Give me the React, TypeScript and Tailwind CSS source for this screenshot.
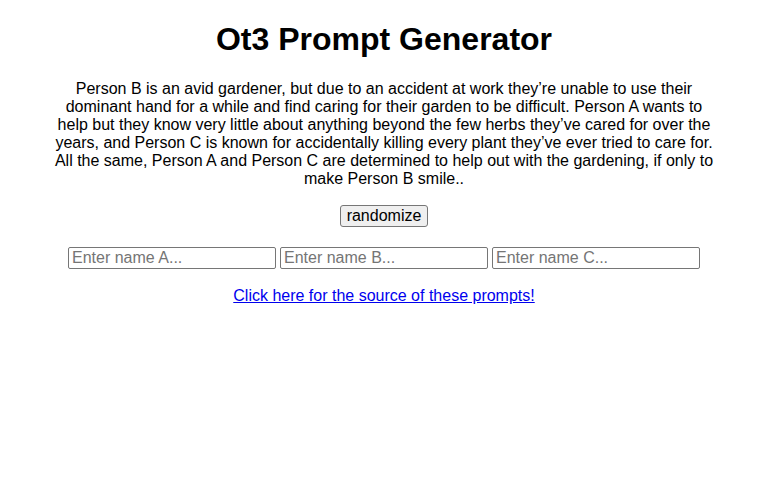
import { useState } from "react";

const prompt =
  "Person B is an avid gardener, but due to an accident at work they\u2019re unable to use their dominant hand for a while and find caring for their garden to be difficult. Person A wants to help but they know very little about anything beyond the few herbs they\u2019ve cared for over the years, and Person C is known for accidentally killing every plant they\u2019ve ever tried to care for. All the same, Person A and Person C are determined to help out with the gardening, if only to make Person B smile..";

const App = () => {
  const [names, setNames] = useState({ a: "", b: "", c: "" });

  return (
    <div className="min-h-screen bg-white px-2 text-black text-center font-['Liberation_Sans',Arial,sans-serif]">
      <h1 className="pt-[21px] text-[32px] leading-[37px] font-bold">Ot3 Prompt Generator</h1>

      <p className="mx-auto mt-[22px] max-w-[664px] text-[16px] leading-[18px]">{prompt}</p>

      <div className="mt-[17px] flex justify-center">
        <button className="h-[22px] rounded-[3px] border border-[#767676] bg-[#efefef] px-[6px] text-[16px] leading-[18px] hover:bg-[#e5e5e5]">
          randomize
        </button>
      </div>

      {/* name inputs */}
      <div className="mt-[20px] flex justify-center gap-[4px]">
        {(["a", "b", "c"] as const).map((k) => (
          <input
            key={k}
            value={names[k]}
            onChange={(e) => setNames({ ...names, [k]: e.target.value })}
            placeholder={`Enter name ${k.toUpperCase()}...`}
            className="h-[22px] w-[208px] rounded-[2px] border border-[#767676] px-[3px] text-[16px] leading-[18px] placeholder:text-[#757575] outline-none"
          />
        ))}
      </div>

      <p className="mt-[18px] text-[16px] leading-[18px]">
        <a href="#" className="text-[#0000ee] underline">
          Click here for the source of these prompts!
        </a>
      </p>
    </div>
  );
};

export default App;
